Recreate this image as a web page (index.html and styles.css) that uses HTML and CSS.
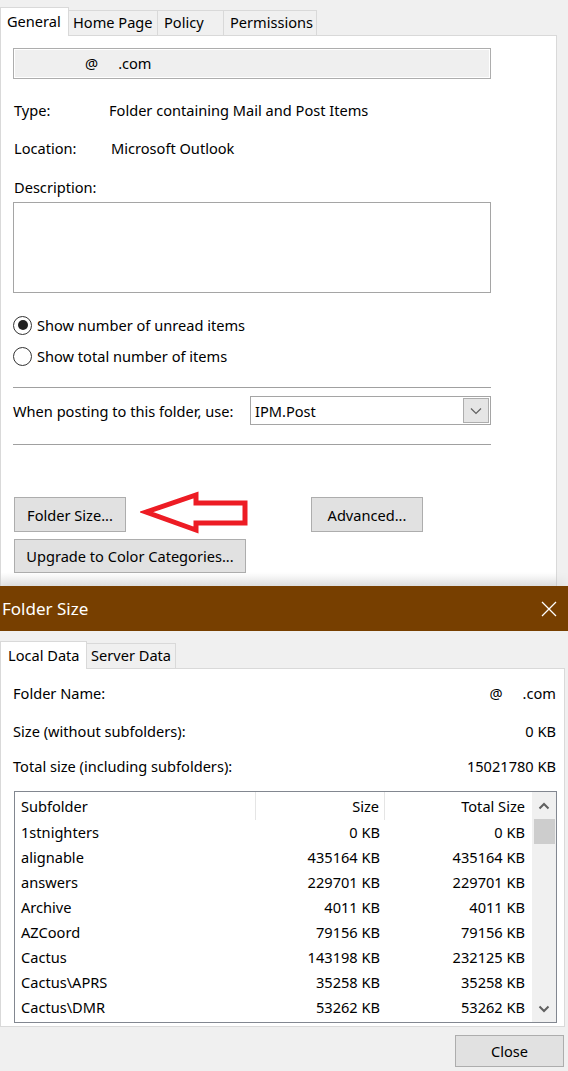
FILE: index.html
```html
<!DOCTYPE html>
<html lang="en">
<head>
    <meta charset="UTF-8">
    <meta name="viewport" content="width=device-width, initial-scale=1.0">
    <title>Folder Properties</title>
    <link rel="stylesheet" href="styles.css">
</head>
<body>
    <!-- Properties window (behind) -->
    <div class="props">
        <div class="tabs">
            <div class="tab active" style="width:69px">General</div>
            <div class="tab tight" style="width:89px">Home Page</div>
            <div class="tab" style="width:66px">Policy</div>
            <div class="tab" style="width:93px">Permissions</div>
        </div>
        <div class="panel">
            <div class="name-box"><span class="blank" style="width:71px"></span>@<span class="blank" style="width:20px"></span>.com</div>

            <div class="field field-type"><span class="field-label">Type:</span>Folder containing Mail and Post Items</div>
            <div class="field field-loc"><span class="field-label loc">Location:</span>Microsoft Outlook</div>
            <div class="field field-desc">Description:</div>
            <div class="desc-box"></div>

            <label class="radio radio-first"><span class="radio-dot checked"></span>Show number of unread items</label>
            <label class="radio"><span class="radio-dot"></span>Show total number of items</label>

            <div class="sep sep-first"></div>
            <div class="post-row">
                <span class="post-label">When posting to this folder, use:</span>
                <div class="combo">
                    <span>IPM.Post</span>
                    <span class="combo-btn">
                        <svg width="12" height="8" viewBox="0 0 12 8"><path d="M1 1.5 L6 6.5 L11 1.5" fill="none" stroke="#606060" stroke-width="1.2"/></svg>
                    </span>
                </div>
            </div>
            <div class="sep sep-second"></div>

            <div class="btn-row">
                <button class="btn" style="width:112px">Folder Size...</button>
                <button class="btn btn-adv" style="width:112px">Advanced...</button>
            </div>
            <div class="btn-row second">
                <button class="btn" style="width:232px">Upgrade to Color Categories...</button>
            </div>
        </div>
        <!-- red annotation arrow -->
        <svg class="arrow" width="112" height="46" viewBox="0 0 112 46">
            <polygon points="6,22 56,5 56,13 105,13 105,33 56,33 56,40" fill="none" stroke="#ed1c24" stroke-width="5" stroke-linejoin="miter"/>
        </svg>
    </div>

    <!-- Folder Size dialog -->
    <div class="dialog">
        <div class="titlebar">
            <span>Folder Size</span>
            <svg class="close-x" width="16" height="16" viewBox="0 0 16 16"><path d="M1 1 L15 15 M15 1 L1 15" stroke="#fff" stroke-width="1.3"/></svg>
        </div>
        <div class="tabs dlg-tabs">
            <div class="tab active" style="width:87px">Local Data</div>
            <div class="tab" style="width:89px">Server Data</div>
        </div>
        <div class="panel dlg-panel">
            <div class="info info-first"><span>Folder Name:</span><span><span class="blank" style="width:20px"></span>@<span class="blank" style="width:20px"></span>.com</span></div>
            <div class="info"><span>Size (without subfolders):</span><span>0 KB</span></div>
            <div class="info info-last"><span>Total size (including subfolders):</span><span>15021780 KB</span></div>

            <div class="listview">
                <div class="list-main">
                    <div class="list-row list-head">
                        <div class="col-name">Subfolder</div>
                        <div class="col-size">Size</div>
                        <div class="col-total">Total Size</div>
                    </div>
                    <div class="list-row"><div class="col-name">1stnighters</div><div class="col-size">0 KB</div><div class="col-total">0 KB</div></div>
                    <div class="list-row"><div class="col-name">alignable</div><div class="col-size">435164 KB</div><div class="col-total">435164 KB</div></div>
                    <div class="list-row"><div class="col-name">answers</div><div class="col-size">229701 KB</div><div class="col-total">229701 KB</div></div>
                    <div class="list-row"><div class="col-name">Archive</div><div class="col-size">4011 KB</div><div class="col-total">4011 KB</div></div>
                    <div class="list-row"><div class="col-name">AZCoord</div><div class="col-size">79156 KB</div><div class="col-total">79156 KB</div></div>
                    <div class="list-row"><div class="col-name">Cactus</div><div class="col-size">143198 KB</div><div class="col-total">232125 KB</div></div>
                    <div class="list-row"><div class="col-name">Cactus\APRS</div><div class="col-size">35258 KB</div><div class="col-total">35258 KB</div></div>
                    <div class="list-row"><div class="col-name">Cactus\DMR</div><div class="col-size">53262 KB</div><div class="col-total">53262 KB</div></div>
                </div>
                <div class="scrollbar">
                    <div class="sb-arrow">
                        <svg width="12" height="8" viewBox="0 0 12 8"><path d="M1.5 6.5 L6 2 L10.5 6.5" fill="none" stroke="#606060" stroke-width="2"/></svg>
                    </div>
                    <div class="sb-thumb"></div>
                    <div class="sb-track"></div>
                    <div class="sb-arrow">
                        <svg width="12" height="8" viewBox="0 0 12 8"><path d="M1.5 1.5 L6 6 L10.5 1.5" fill="none" stroke="#606060" stroke-width="2"/></svg>
                    </div>
                </div>
            </div>
        </div>
        <div class="footer">
            <button class="btn btn-close">Close</button>
        </div>
    </div>
</body>
</html>
```

FILE: styles.css
```css
* {
    box-sizing: border-box;
}
body {
    margin: 0;
    width: 568px;
    background-color: #f0f0f0;
    font-family: "Segoe UI", "Noto Sans", sans-serif;
    font-size: 14.6px;
    color: #000;
}

/* tabs */
.tabs {
    display: flex;
    align-items: flex-end;
    height: 35px;
}
.tab {
    height: 25px;
    line-height: 23px;
    padding-left: 6px;
    border: 1px solid #d9d9d9;
    border-bottom: none;
    border-left: none;
    background-color: #f0f0f0;
    white-space: nowrap;
    overflow: hidden;
}
.tab.tight {
    padding-left: 4px;
}
.tab.active {
    height: 29px;
    line-height: 27px;
    padding-left: 6px;
    margin-bottom: -1px;
    border-left: 1px solid #d9d9d9;
    background-color: #fff;
    position: relative;
    z-index: 1;
}

/* properties window */
.props {
    height: 586px;
    overflow: hidden;
    position: relative;
}
.panel {
    width: 557px;
    height: 560px;
    padding-left: 12px;
    border: 1px solid #d9d9d9;
    background-color: #fff;
}
.props .panel {
    background: linear-gradient(to bottom, #fff 0, #fff 537px, #e9e9e9 551px);
}
.name-box {
    width: 478px;
    height: 31px;
    margin-top: 12px;
    border: 1px solid #adadad;
    background-color: #efefef;
    box-shadow: inset 0 0 0 1px #fff;
    line-height: 29px;
    display: flex;
}
.blank {
    display: inline-block;
}
.field {
    height: 20px;
    line-height: 20px;
    padding-left: 1px;
    display: flex;
}
.field-label {
    width: 95px;
}
.field-label.loc {
    width: 97px;
}
.field-type {
    margin-top: 21px;
}
.field-loc {
    margin-top: 18px;
}
.field-desc {
    margin-top: 19px;
}
.desc-box {
    width: 478px;
    height: 91px;
    margin-top: 5px;
    border: 1px solid #a5a5a5;
}
.radio {
    display: flex;
    align-items: center;
    height: 20px;
    margin-top: 11px;
}
.radio-first {
    margin-top: 22px;
}
.radio-dot {
    width: 19px;
    height: 19px;
    margin-right: 5px;
    border: 1px solid #333;
    border-radius: 50%;
    display: flex;
    align-items: center;
    justify-content: center;
}
.radio-dot.checked::after {
    content: "";
    width: 10px;
    height: 10px;
    border-radius: 50%;
    background-color: #222;
}
.sep {
    width: 478px;
    height: 1px;
    background-color: #a0a0a0;
}
.sep-first {
    margin-top: 21px;
}
.sep-second {
    margin-top: 19px;
}
.post-row {
    display: flex;
    align-items: center;
    margin-top: 8px;
}
.post-label {
    width: 237px;
}
.combo {
    width: 241px;
    height: 29px;
    border: 1px solid #a5a5a5;
    display: flex;
    align-items: center;
    justify-content: space-between;
    padding-left: 4px;
    padding-right: 1px;
}
.combo-btn {
    width: 26px;
    height: 25px;
    border: 1px solid #adadad;
    background-color: #e5e5e5;
    display: flex;
    align-items: center;
    justify-content: center;
}
.btn-row {
    display: flex;
    margin-top: 52px;
    padding-left: 1px;
}
.btn-row.second {
    margin-top: 7px;
}
.btn {
    height: 35px;
    border: 1px solid #adadad;
    background-color: #e1e1e1;
    font-family: inherit;
    font-size: 14.6px;
    color: #000;
    padding: 0;
}
.btn-row.second .btn {
    height: 34px;
}
.btn-adv {
    margin-left: 185px;
}
.arrow {
    position: absolute;
    left: 140px;
    top: 490px;
}

/* folder size dialog */
.dialog {
    box-shadow: 0 -6px 10px rgba(0, 0, 0, 0.06);
    position: relative;
}
.titlebar {
    height: 45px;
    background-color: #773f00;
    color: #fff;
    font-size: 17px;
    display: flex;
    align-items: center;
    justify-content: space-between;
    padding-left: 2px;
    padding-right: 11px;
}
.dlg-tabs {
    height: 37px;
}
.dlg-tabs .tab {
    padding-left: 4px;
}
.dlg-tabs .tab.active {
    height: 28px;
    line-height: 26px;
    padding-left: 7px;
}
.dlg-panel {
    width: 565px;
    height: 359px;
    padding-right: 8px;
}
.info {
    display: flex;
    justify-content: space-between;
    height: 20px;
    line-height: 20px;
    margin-top: 18px;
}
.info-first {
    margin-top: 14px;
}
.info-last {
    margin-top: 15px;
}
.listview {
    display: flex;
    width: 543px;
    height: 232px;
    margin-top: 15px;
    margin-left: 1px;
    border: 1px solid #828790;
    overflow: hidden;
}
.list-main {
    flex: 1;
}
.list-row {
    display: grid;
    grid-template-columns: 241px 129px 147px;
    height: 25px;
    line-height: 25px;
}
.list-row.list-head {
    height: 28px;
    line-height: 28px;
}
.col-name {
    padding-left: 6px;
}
.col-size {
    text-align: right;
    padding-right: 5px;
}
.col-total {
    text-align: right;
    padding-right: 7px;
}
.list-head .col-name,
.list-head .col-size {
    border-right: 1px solid #e5e5e5;
}
.scrollbar {
    width: 24px;
    background-color: #f0f0f0;
    display: flex;
    flex-direction: column;
    align-items: center;
}
.sb-arrow {
    height: 27px;
    display: flex;
    align-items: center;
    justify-content: center;
}
.sb-thumb {
    width: 21px;
    height: 25px;
    background-color: #cdcdcd;
}
.sb-track {
    flex: 1;
}
.footer {
    display: flex;
    justify-content: flex-end;
    padding-top: 8px;
    padding-right: 4px;
}
.btn-close {
    width: 109px;
    height: 32px;
}
```
